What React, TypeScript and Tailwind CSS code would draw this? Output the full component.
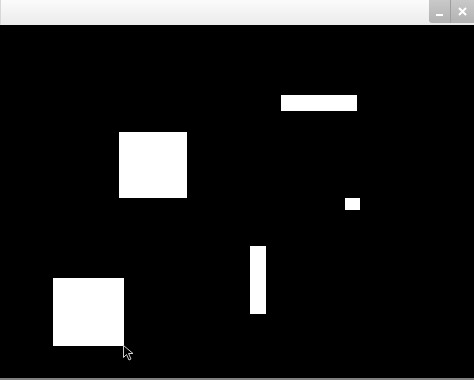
import React from 'react';

// window canvas: shapes are placed by their pixel coordinates
const shapes = [
  { left: 281, top: 70, width: 76, height: 16 },
  { left: 119, top: 107, width: 68, height: 66 },
  { left: 345, top: 173, width: 15, height: 12 },
  { left: 250, top: 221, width: 16, height: 68 },
  { left: 53, top: 253, width: 71, height: 68 },
];

const App = () => {
  return (
    <div className="w-[474px] h-[380px] flex flex-col overflow-hidden font-['Liberation_Sans',sans-serif]">
      {/* Title bar */}
      <div className="h-[25px] shrink-0 flex justify-end bg-gradient-to-b from-[#fbfbfb] to-[#ebebeb] border-l border-[#d8d8d8]">
        <div className="flex h-[23px] rounded-bl-[3px] overflow-hidden">
          <button className="w-[22px] h-full flex items-end justify-center pb-[7px] bg-gradient-to-b from-[#c9c9c9] to-[#b2b2b2] border-r border-[#9e9e9e]">
            <span className="block w-[7px] h-[2px] bg-white" />
          </button>
          <button className="w-[23px] h-full flex items-center justify-center bg-gradient-to-b from-[#c9c9c9] to-[#b2b2b2]">
            <svg width="9" height="9" viewBox="0 0 9 9">
              <path d="M1 1 L8 8 M8 1 L1 8" stroke="white" strokeWidth="2" />
            </svg>
          </button>
        </div>
      </div>

      {/* Canvas */}
      <div className="relative flex-1 bg-black">
        {shapes.map((s, i) => (
          <div
            key={i}
            className="absolute bg-white"
            style={{ left: s.left, top: s.top, width: s.width, height: s.height }}
          />
        ))}
        {/* mouse cursor */}
        <svg className="absolute left-[123px] top-[320px]" width="12" height="16" viewBox="0 0 12 16">
          <path d="M0.5 0.5 L0.5 12.5 L3.5 9.5 L6 15 L8 14 L5.5 8.5 L10 8.5 Z" fill="black" stroke="#d0d0d0" strokeWidth="1" />
        </svg>
      </div>
      <div className="h-[2px] shrink-0 bg-[#808080]" />
    </div>
  );
};

export default App;
